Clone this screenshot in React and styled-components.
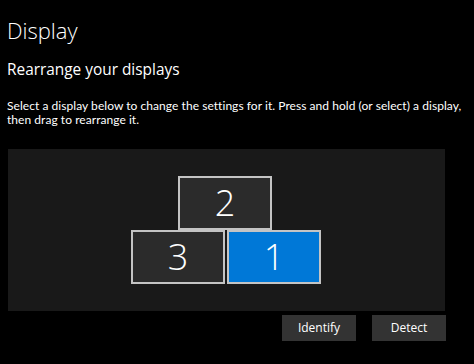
import React from "react";
import styled, { createGlobalStyle } from "styled-components";

const Global = createGlobalStyle`
  html, body { margin: 0; padding: 0; background: #000; }
  body { font-family: "Open Sans", "Noto Sans", sans-serif; color: #fff; }
`;

const Page = styled.div`
  width: 474px;
  height: 364px;
  box-sizing: border-box;
  padding: 14px 0 0 7px;
  background: #000;
  overflow: hidden;
`;

const Title = styled.h1`
  margin: 0;
  font-size: 22px;
  line-height: 32px;
  font-weight: 300;
`;

const Subtitle = styled.h2`
  margin: 13px 0 0;
  font-size: 15.4px;
  line-height: 22px;
  font-weight: 400;
`;

const Description = styled.p`
  margin: 18px 0 0;
  font-family: "Lato", "Open Sans", sans-serif;
  font-size: 12px;
  line-height: 14.4px;
  letter-spacing: ${(p) => p.$spacing}px;
  white-space: nowrap;
`;

const Canvas = styled.div`
  margin: 21px 0 0 1px;
  width: 437px;
  height: 162px;
  background: #191919;
  display: flex;
  flex-direction: column;
  align-items: center;
  justify-content: center;
`;

const MonitorRow = styled.div`
  display: flex;
  gap: 2px;
  margin-left: ${(p) => p.$shift || 0}px;
`;

const Monitor = styled.div`
  width: 94px;
  height: 54px;
  box-sizing: border-box;
  border: 2px solid #c4c4c4;
  background: ${(p) => (p.$active ? "#0078d7" : "#2b2b2b")};
  display: flex;
  align-items: center;
  justify-content: center;
  font-size: 36px;
  font-weight: 300;
  line-height: 1;
  color: #fff;
`;

const Actions = styled.div`
  width: 439px;
  display: flex;
  justify-content: flex-end;
  gap: 16px;
  margin-top: 4px;
`;

const Button = styled.button`
  width: 74px;
  height: 26px;
  border: none;
  background: #333333;
  color: #fff;
  font-family: "Open Sans", "Noto Sans", sans-serif;
  font-size: 12px;
  padding: 0;
`;

export default function App() {
  return (
    <>
      <Global />
      <Page>
        <Title>Display</Title>
        <Subtitle>Rearrange your displays</Subtitle>
        <Description $spacing={0.05}>
          Select a display below to change the settings for it. Press and hold (or select) a display,
          <br />
          then drag to rearrange it.
        </Description>
        <Canvas>
          <MonitorRow $shift={-3}>
            <Monitor>2</Monitor>
          </MonitorRow>
          <MonitorRow $shift={-1}>
            <Monitor>3</Monitor>
            <Monitor $active>1</Monitor>
          </MonitorRow>
        </Canvas>
        <Actions>
          <Button>Identify</Button>
          <Button>Detect</Button>
        </Actions>
      </Page>
    </>
  );
}
